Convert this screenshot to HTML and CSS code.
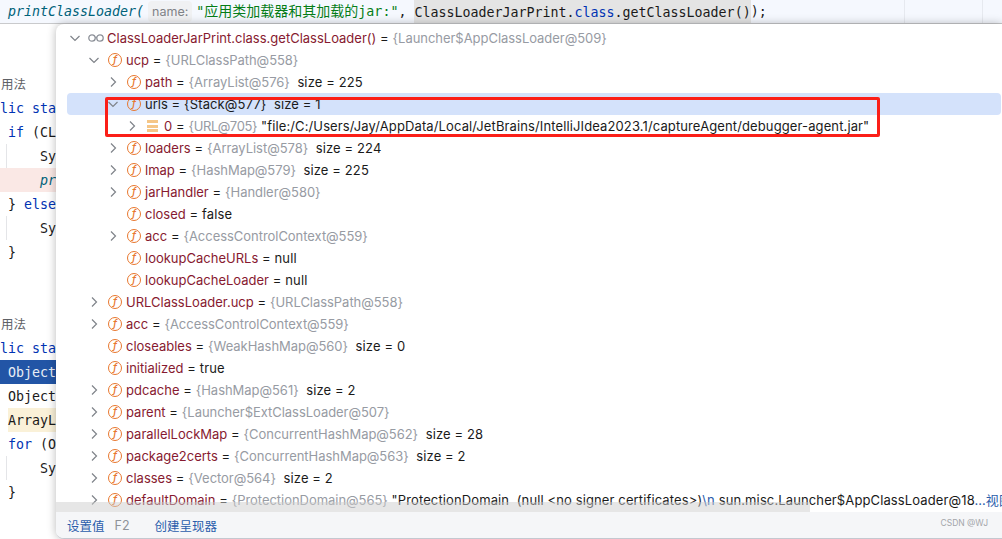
FILE: index.html
```html
<!DOCTYPE html>
<html lang="zh">
<head>
<meta charset="utf-8">
<title>Debugger</title>
<link rel="stylesheet" href="styles.css">
</head>
<body>
<svg class="defs" width="0" height="0" aria-hidden="true">
  <symbol id="right" viewBox="0 0 16 16"><path d="M6 3.5 10.5 8 6 12.5" fill="none" stroke="#7f8389" stroke-width="1.2"/></symbol>
  <symbol id="down" viewBox="0 0 16 16"><path d="M3.5 6 8 10.5 12.5 6" fill="none" stroke="#7f8389" stroke-width="1.2"/></symbol>
</svg>

<div class="topbar">
  <div class="topcode"><span class="call">printClassLoader(</span><span class="hint">name:</span><span class="str">"<span class="cjk">应用类加载器和其加载的</span>jar:"</span><span class="plain">, </span><span class="mark">ClassLoaderJarPrint.<span class="kw">class</span>.getClassLoader()</span><span class="plain">);</span></div>
  <div class="stripes"><i></i><i></i></div>
</div>

<div class="editor">
  <div class="line usage">用法</div>
  <div class="line flush"><span class="kw">lic sta</span></div>
  <div class="line"><span class="kw">if</span> (CL</div>
  <div class="line guide">    Sy</div>
  <div class="line errorline">    <span class="call">pr</span></div>
  <div class="line">} <span class="kw">else</span></div>
  <div class="line guide">    Sy</div>
  <div class="line">}</div>
  <div class="line"></div>
  <div class="line"></div>
  <div class="line usage">用法</div>
  <div class="line flush"><span class="kw">lic sta</span></div>
  <div class="line selected">Object</div>
  <div class="line">Object</div>
  <div class="line warnline">ArrayL</div>
  <div class="line"><span class="kw">for</span> (O</div>
  <div class="line guide">    Sy</div>
  <div class="line">}</div>
</div>

<div class="popup">
  <div class="tree">
    <div class="row"><svg class="chev"><use href="#down"/></svg><svg class="glasses" viewBox="0 0 16 10"><circle cx="4" cy="5" r="3.2"/><circle cx="12" cy="5" r="3.2"/><path d="M7.2 4.5h1.6"/></svg><span class="txt"><b>ClassLoaderJarPrint.class.getClassLoader()</b> = <em>{Launcher$AppClassLoader@509}</em></span></div>
    <div class="row l1"><svg class="chev"><use href="#down"/></svg><span class="fld">f</span><span class="txt"><b>ucp</b> = <em>{URLClassPath@558}</em></span></div>
    <div class="row l2"><svg class="chev"><use href="#right"/></svg><span class="fld">f</span><span class="txt"><b>path</b> = <em>{ArrayList@576}</em>  size = 225</span></div>
    <div class="row l2 current"><svg class="chev"><use href="#down"/></svg><span class="fld">f</span><span class="txt"><b>urls</b> = {Stack@577}  size = 1</span></div>
    <div class="row l3"><svg class="chev"><use href="#right"/></svg><span class="stack"><i></i><i></i><i></i></span><span class="txt"><b>0</b> = <em class="tight">{URL@705}</em> "file:/C:/Users/Jay/AppData/Local/JetBrains/IntelliJIdea2023.1/captureAgent/debugger-agent.jar"</span></div>
    <div class="row l2"><svg class="chev"><use href="#right"/></svg><span class="fld">f</span><span class="txt"><b>loaders</b> = <em>{ArrayList@578}</em>  size = 224</span></div>
    <div class="row l2"><svg class="chev"><use href="#right"/></svg><span class="fld">f</span><span class="txt"><b>lmap</b> = <em>{HashMap@579}</em>  size = 225</span></div>
    <div class="row l2"><svg class="chev"><use href="#right"/></svg><span class="fld">f</span><span class="txt"><b>jarHandler</b> = <em>{Handler@580}</em></span></div>
    <div class="row l2"><span class="chev"></span><span class="fld">f</span><span class="txt"><b>closed</b> = false</span></div>
    <div class="row l2"><svg class="chev"><use href="#right"/></svg><span class="fld">f</span><span class="txt"><b>acc</b> = <em>{AccessControlContext@559}</em></span></div>
    <div class="row l2"><span class="chev"></span><span class="fld">f</span><span class="txt"><b>lookupCacheURLs</b> = null</span></div>
    <div class="row l2"><span class="chev"></span><span class="fld">f</span><span class="txt"><b>lookupCacheLoader</b> = null</span></div>
    <div class="row l1"><svg class="chev"><use href="#right"/></svg><span class="fld">f</span><span class="txt"><b>URLClassLoader.ucp</b> = <em>{URLClassPath@558}</em></span></div>
    <div class="row l1"><svg class="chev"><use href="#right"/></svg><span class="fld">f</span><span class="txt"><b>acc</b> = <em>{AccessControlContext@559}</em></span></div>
    <div class="row l1"><span class="chev"></span><span class="fld">f</span><span class="txt"><b>closeables</b> = <em>{WeakHashMap@560}</em>  size = 0</span></div>
    <div class="row l1"><span class="chev"></span><span class="fld">f</span><span class="txt"><b>initialized</b> = true</span></div>
    <div class="row l1"><svg class="chev"><use href="#right"/></svg><span class="fld">f</span><span class="txt"><b>pdcache</b> = <em>{HashMap@561}</em>  size = 2</span></div>
    <div class="row l1"><svg class="chev"><use href="#right"/></svg><span class="fld">f</span><span class="txt"><b>parent</b> = <em>{Launcher$ExtClassLoader@507}</em></span></div>
    <div class="row l1"><svg class="chev"><use href="#right"/></svg><span class="fld">f</span><span class="txt"><b>parallelLockMap</b> = <em>{ConcurrentHashMap@562}</em>  size = 28</span></div>
    <div class="row l1"><svg class="chev"><use href="#right"/></svg><span class="fld">f</span><span class="txt"><b>package2certs</b> = <em>{ConcurrentHashMap@563}</em>  size = 2</span></div>
    <div class="row l1"><svg class="chev"><use href="#right"/></svg><span class="fld">f</span><span class="txt"><b>classes</b> = <em>{Vector@564}</em>  size = 2</span></div>
    <div class="row l1"><svg class="chev"><use href="#right"/></svg><span class="fld">f</span><span class="txt"><b>defaultDomain</b> = <em>{ProtectionDomain@565}</em> "ProtectionDomain  (null &lt;no signer certificates&gt;)<u>\n</u> sun.misc.Launcher$AppClassLoader@18<u>…视图</u></span></div>
    <div class="hscroll"></div>
  </div>
  <div class="footer">
    <span class="act">设置值</span><span class="key">F2</span><span class="act second">创建呈现器</span>
    <span class="wm">CSDN @WJ</span>
  </div>
</div>

<div class="redbox"></div>
</body>
</html>
```

FILE: styles.css
```css
* { box-sizing: border-box; }
html, body { margin: 0; padding: 0; }
body {
  position: relative;
  width: 1002px;
  height: 539px;
  overflow: hidden;
  background: #fff;
  color: #1a1a1a;
  font-family: "DejaVu Sans Mono", monospace;
}
.defs { position: absolute; }

.topbar {
  position: relative;
  height: 24px;
  background: #f5f8fe;
  border-bottom: 1px solid #c9cacc;
}
.topcode {
  display: flex;
  align-items: center;
  height: 23px;
  padding-left: 8px;
  font-size: 13.3px;
  line-height: 25px;
  white-space: pre;
}
.call { color: #00627a; font-style: italic; }
.hint {
  height: 21px;
  margin: 0 4px;
  padding: 0 4px;
  border-radius: 4px;
  background: #f0f1f3;
  color: #7f8287;
  font: 12.5px/21px Inter, sans-serif;
}
.str { color: #067d17; font-family: "DejaVu Sans Mono", "Noto Sans CJK SC", monospace; }
.cjk { font-size: 14px; }
.mark { background: #e4e4e4; height: 23px; line-height: 25px; }
.kw { color: #0033b3; }
.stripes i {
  position: absolute;
  top: 0;
  bottom: 0;
  width: 1px;
  background: #e6e9ef;
}
.stripes i:first-child { left: 904px; }
.stripes i:last-child { left: 982px; }

.editor {
  padding-top: 48px;
  font-size: 13.3px;
}
.line {
  height: 24px;
  padding-left: 8px;
  line-height: 25px;
  white-space: pre;
}
.usage {
  padding-left: 1px;
  color: #5e6166;
  font: 12.5px/24px "Noto Sans CJK SC", sans-serif;
}
.flush { padding-left: 0; }
.guide { background: linear-gradient(#e4e5e8, #e4e5e8) 6px 0 / 1px 100% no-repeat; }
.errorline { background: #fae8e5; }
.selected { background: #2255a6; color: #e8edf5; }
.warnline { margin-left: 8px; padding-left: 0; background: #faf1d8; }

.popup {
  position: absolute;
  left: 56px;
  top: 24px;
  right: 0;
  bottom: 0;
  display: flex;
  flex-direction: column;
  overflow: hidden;
  background: #fff;
  border-radius: 8px 0 0 8px;
  border-bottom: 1px solid #c4c8d0;
  box-shadow: 0 0 10px rgba(0, 0, 0, .28);
}
.tree {
  position: relative;
  flex: 1;
  overflow: hidden;
  padding-top: 3px;
  font: 13px/22px Inter, "Noto Sans CJK SC", sans-serif;
}
.row {
  display: flex;
  align-items: center;
  height: 22px;
  margin: 0 1px 0 11px;
  white-space: pre;
}
.l1 { padding-left: 19px; }
.l2 { padding-left: 38px; }
.l3 { padding-left: 57px; }
.current { background: #d4e2fb; border-radius: 4px; }
.chev { flex: none; width: 16px; height: 16px; }
.glasses {
  flex: none;
  width: 16px;
  height: 10px;
  margin: 0 3px 0 5px;
  fill: none;
  stroke: #8d9199;
  stroke-width: 1.3;
}
.fld {
  flex: none;
  width: 14px;
  height: 14px;
  margin: 0 4px 0 6px;
  border: 1.4px solid #e8772e;
  border-radius: 50%;
  color: #e8772e;
  font: italic 500 10.5px/11.5px Inter, sans-serif;
  text-align: center;
}
.stack {
  flex: none;
  display: flex;
  flex-direction: column;
  justify-content: space-between;
  width: 11px;
  height: 12px;
  margin: 0 6px 0 7px;
}
.stack i { height: 3px; background: #f5c687; }
.txt { letter-spacing: .12px; }
.txt b { font-weight: 400; color: #871a30; letter-spacing: 0; }
.current .txt b { color: inherit; }
.txt em { font-style: normal; color: #979ba3; letter-spacing: -.04px; }
.txt em.tight { letter-spacing: -.35px; }
.txt u { text-decoration: none; color: #2a5dab; }

.hscroll {
  position: absolute;
  left: 0;
  bottom: 0;
  width: 754px;
  height: 10px;
  background: rgba(205, 205, 205, .5);
}
.footer {
  position: relative;
  flex: none;
  display: flex;
  align-items: center;
  height: 26px;
  padding-left: 11px;
  background: #f5f6f8;
  font: 12.5px "Noto Sans CJK SC", sans-serif;
}
.act { color: #2a5dab; }
.key { margin-left: 10px; color: #8f9298; font-family: Inter, sans-serif; }
.second { margin-left: 25px; }
.wm {
  position: absolute;
  right: 14px;
  top: 6px;
  color: #a3a5a9;
  font: 8.5px Inter, sans-serif;
}

.redbox {
  position: absolute;
  left: 105px;
  top: 97px;
  width: 775px;
  height: 40px;
  border: 3px solid #fb1f18;
  border-radius: 2px;
}
```
